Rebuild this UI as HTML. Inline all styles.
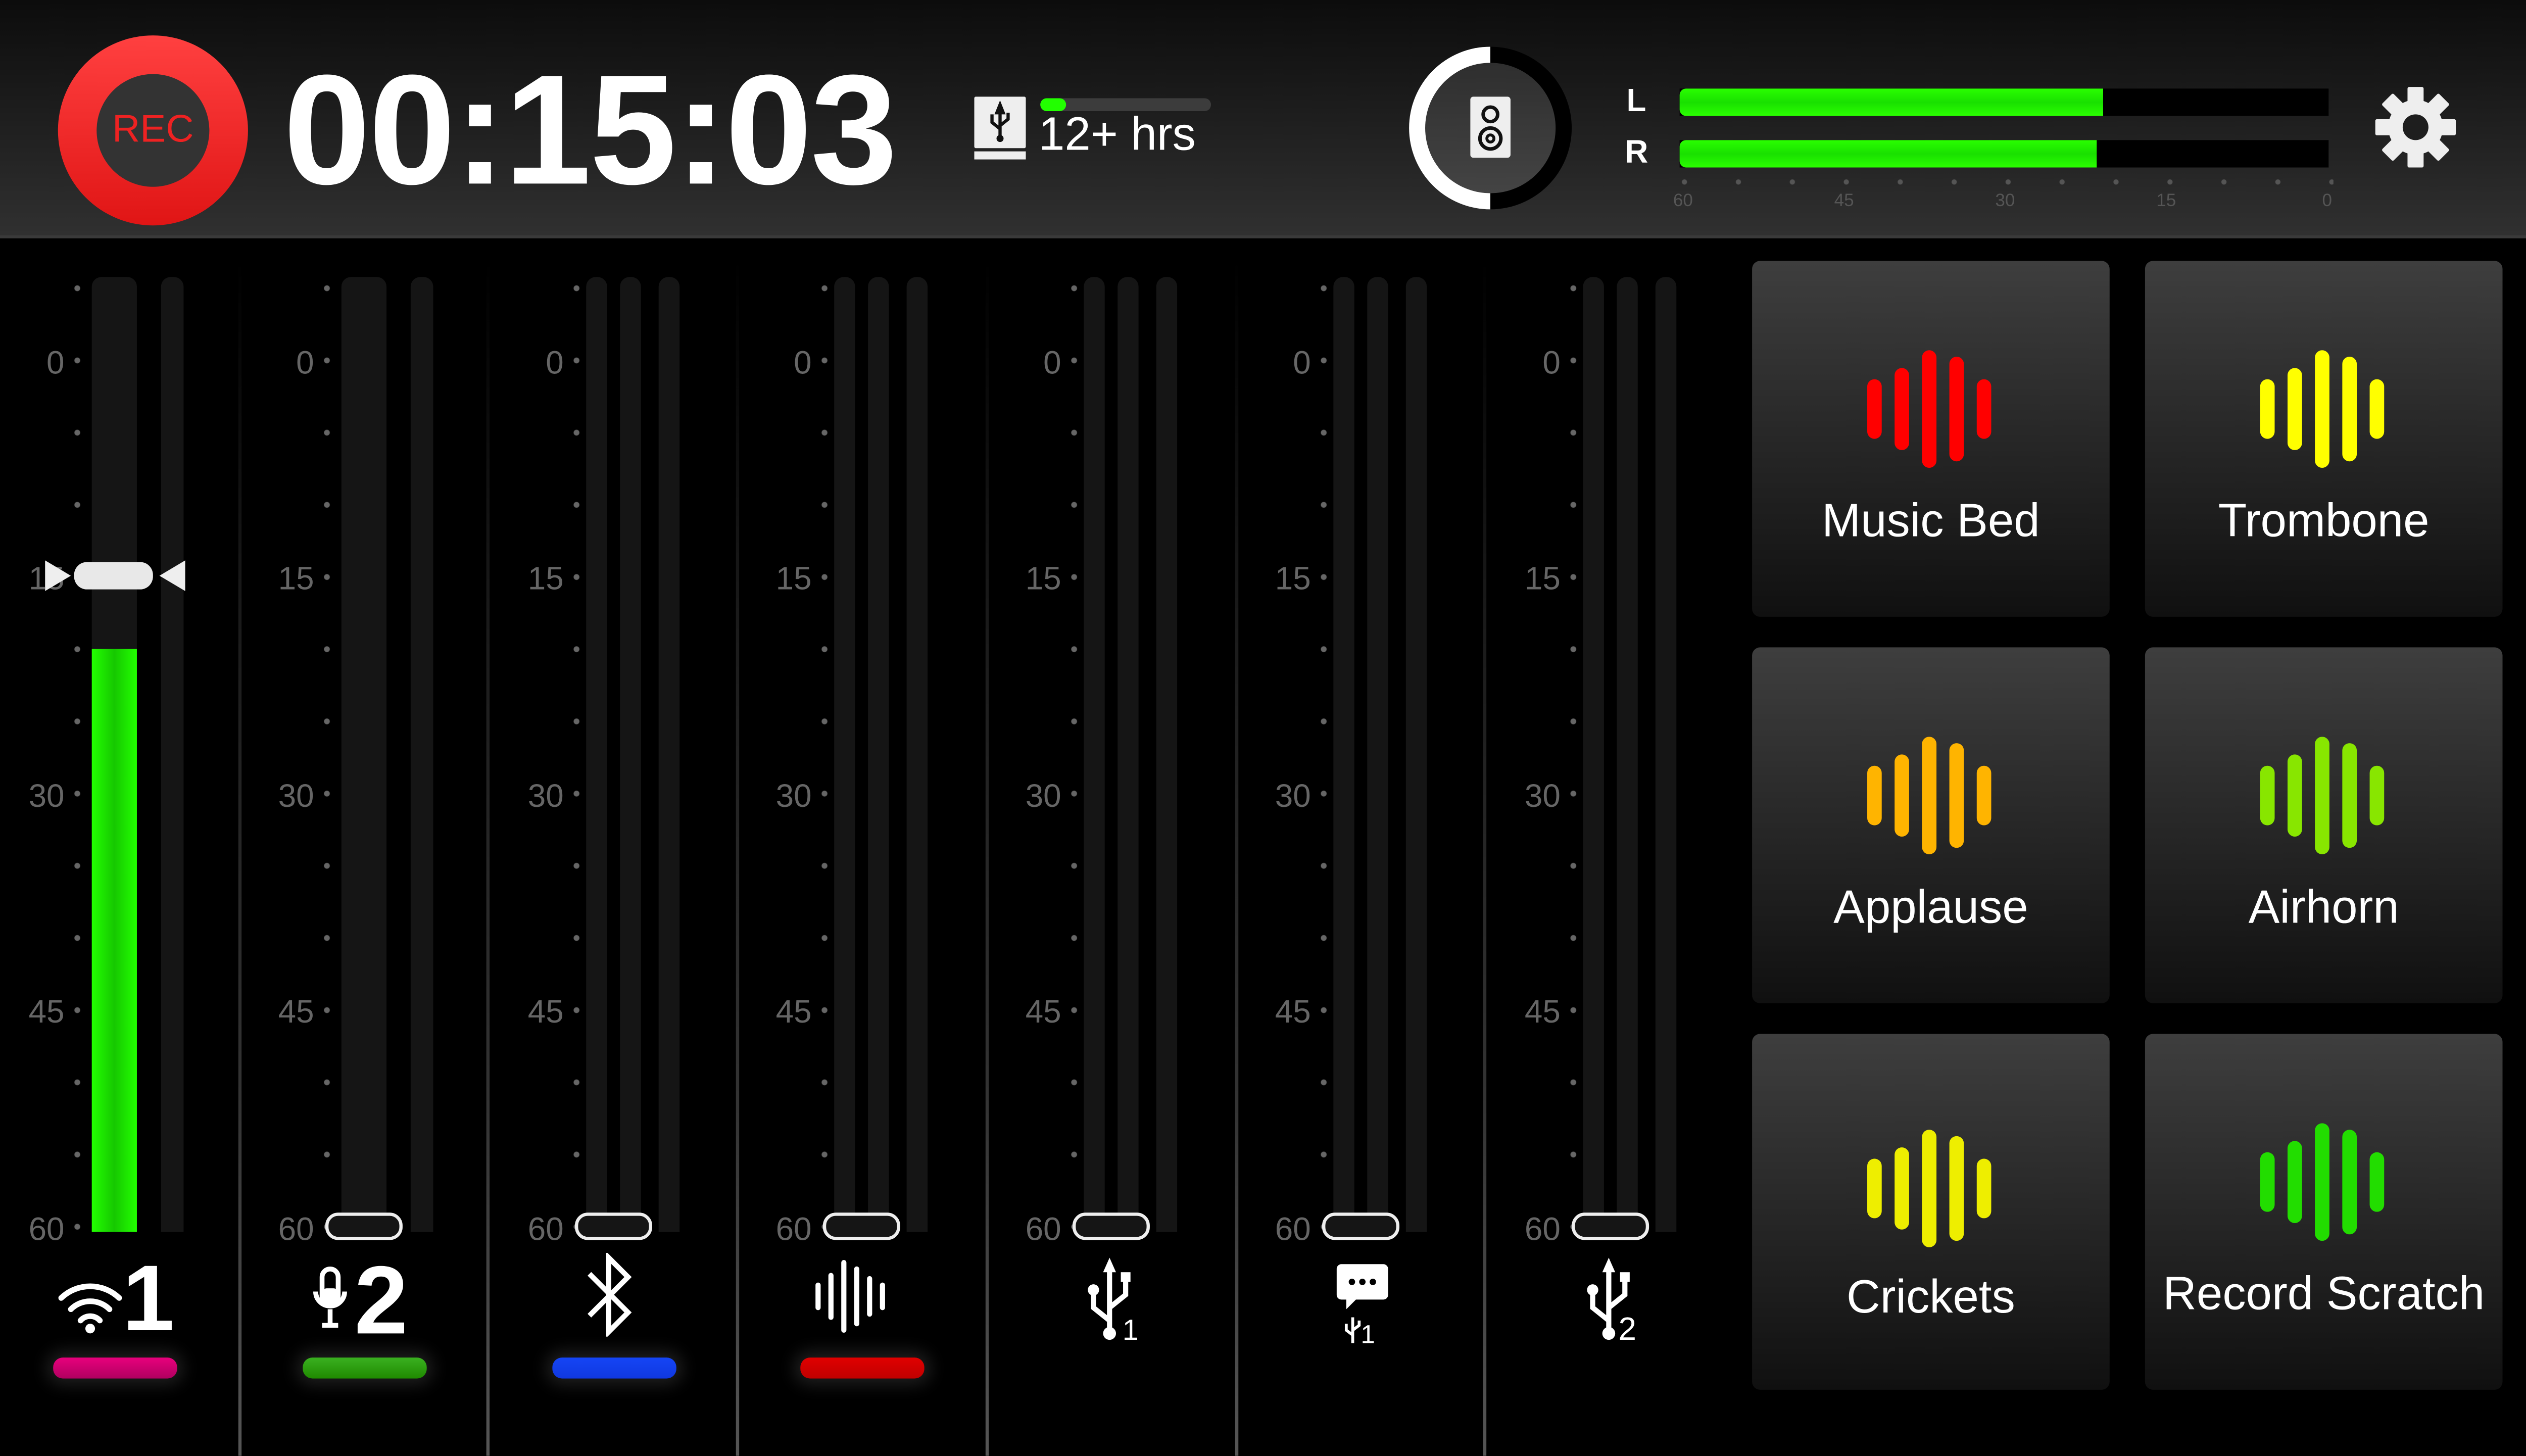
<!DOCTYPE html>
<html><head><meta charset="utf-8"><style>
*{margin:0;padding:0;box-sizing:border-box}
html,body{width:5132px;height:2881px;background:#000;overflow:hidden}
#s{position:absolute;left:0;top:0;width:1610px;height:904px;transform:scale(3.1876);transform-origin:0 0;background:#000;font-family:"Liberation Sans",sans-serif;color:#fff}
.a{position:absolute}
.top{left:0;top:0;width:1610px;height:148px;background:linear-gradient(#0c0c0c,#303030);border-bottom:2px solid #3a3a3a}
.lbl{position:absolute;width:30px;text-align:right;font-size:20px;color:#666;line-height:20px}
.dots{position:absolute;top:176px;width:6px;height:595px;background:radial-gradient(circle at 3px 3px,#666 1.6px,transparent 2px);background-size:6px 44.83px}
.tr{position:absolute;top:172px;height:593px;background:#151515;border-radius:6px 6px 0 0}
.sep{position:absolute;top:160px;width:2px;height:744px;background:linear-gradient(#000,#1a1a1a 30%,#333 70%,#555)}
.fh{position:absolute;top:753px;width:48px;height:17px;border:2.5px solid #eee;border-radius:8px;background:#151515}
.pill{position:absolute;top:843px;width:77px;height:13px;border-radius:6px;box-shadow:0 0 10px 4px rgba(60,60,60,.5)}
.pad{position:absolute;width:222px;height:221px;border-radius:5px;background:linear-gradient(#3e3e3e,#101010)}
.pad span{position:absolute;left:0;width:100%;text-align:center;font-size:29px;top:146px}
.pad svg{position:absolute;left:71px;top:54px}
</style></head><body><div id="s">
<div class="a top"></div>
<div class="a" style="left:36px;top:22px;width:118px;height:118px;border-radius:50%;background:linear-gradient(#ff4040,#e01515)"></div>
<div class="a" style="left:60px;top:46px;width:70px;height:70px;border-radius:50%;background:#333"></div>
<div class="a" style="left:60px;top:66px;width:70px;text-align:center;color:#ee2222;font-size:24px;line-height:30px">REC</div>
<div class="a" style="left:176px;top:26px;font-size:97px;font-weight:bold;line-height:110px;letter-spacing:-1px">00:15:03</div>
<svg class="a" style="left:604px;top:60px" width="34" height="40" viewBox="0 0 34 40"><rect x="1" y="0" width="32" height="32" rx="1" fill="#eee"/><rect x="1" y="34" width="32" height="5" fill="#eee"/><path d="M17 5v22M17 5l-2 5h4z M17 20l-5-4v-5 M17 18l5-4v-4" stroke="#111" stroke-width="2" fill="none"/><circle cx="17" cy="26" r="2.2" fill="#111"/></svg>
<div class="a" style="left:646px;top:61px;width:106px;height:8px;border-radius:4px;background:#3c3c3c"></div>
<div class="a" style="left:646px;top:61px;width:16px;height:8px;border-radius:4px;background:#22ff00"></div>
<div class="a" style="left:645px;top:67px;font-size:29px;line-height:34px">12+ hrs</div>
<div class="a" style="left:875px;top:29px;width:101px;height:101px;border-radius:50%;background:linear-gradient(90deg,#fff 50%,#000 50%)"></div>
<div class="a" style="left:885px;top:39px;width:81px;height:81px;border-radius:50%;background:linear-gradient(#2e2e2e,#444)"></div>
<svg class="a" style="left:913px;top:60px" width="25" height="38" viewBox="0 0 25 38"><rect width="25" height="38" rx="2" fill="#eee"/><circle cx="12.5" cy="11" r="4.5" fill="none" stroke="#111" stroke-width="2.2"/><circle cx="12.5" cy="26" r="6.5" fill="none" stroke="#111" stroke-width="2.2"/><circle cx="12.5" cy="26" r="2.2" fill="none" stroke="#111" stroke-width="1.8"/></svg>
<div class="a" style="left:1010px;top:52px;font-size:20px;font-weight:bold">L</div>
<div class="a" style="left:1009px;top:84px;font-size:20px;font-weight:bold">R</div>
<div class="a" style="left:1043px;top:55px;width:403px;height:17px;background:#000"></div>
<div class="a" style="left:1043px;top:55px;width:263px;height:17px;border-radius:4px 0 0 4px;background:linear-gradient(#2aff00,#19e000 50%,#2aff00)"></div>
<div class="a" style="left:1043px;top:87px;width:403px;height:17px;background:#000"></div>
<div class="a" style="left:1043px;top:87px;width:259px;height:17px;border-radius:4px 0 0 4px;background:linear-gradient(#2aff00,#19e000 50%,#2aff00)"></div>
<div class="a" style="left:1043px;top:110px;width:406px;height:6px;background:radial-gradient(circle at 3px 3px,#555 1.4px,transparent 1.8px);background-size:33.5px 6px"></div>
<div class="a" style="left:1039px;top:119px;font-size:11px;color:#555">60</div>
<div class="a" style="left:1139px;top:119px;font-size:11px;color:#555">45</div>
<div class="a" style="left:1239px;top:119px;font-size:11px;color:#555">30</div>
<div class="a" style="left:1339px;top:119px;font-size:11px;color:#555">15</div>
<div class="a" style="left:1442px;top:119px;font-size:11px;color:#555">0</div>
<svg class="a" style="left:1474px;top:53px" width="52" height="52" viewBox="-26 -26 52 52"><g fill="#eee"><circle r="17"/><g id="t"><rect x="-5" y="-25" width="10" height="12" rx="1"/></g><use href="#t" transform="rotate(45)"/><use href="#t" transform="rotate(90)"/><use href="#t" transform="rotate(135)"/><use href="#t" transform="rotate(180)"/><use href="#t" transform="rotate(225)"/><use href="#t" transform="rotate(270)"/><use href="#t" transform="rotate(315)"/></g><circle r="8" fill="#1e1e1e"/></svg>

<div class="sep" style="left:148px"></div><div class="sep" style="left:302px"></div><div class="sep" style="left:457px"></div><div class="sep" style="left:612px"></div><div class="sep" style="left:767px"></div><div class="sep" style="left:921px"></div>

<div class="a" style="left:0;top:0">
<div class="lbl" style="left:10px;top:216px">0</div><div class="lbl" style="left:10px;top:350px">15</div><div class="lbl" style="left:10px;top:485px">30</div><div class="lbl" style="left:10px;top:619px">45</div><div class="lbl" style="left:10px;top:754px">60</div>
<div class="dots" style="left:45px"></div>
<div class="tr" style="left:57px;width:28px"></div><div class="tr" style="left:100px;width:14px"></div>
<div class="a" style="left:57px;top:403px;width:28px;height:362px;background:linear-gradient(90deg,#22ff00,#16c800 50%,#22ff00)"></div>
<svg class="a" style="left:27px;top:347px" width="89" height="21" viewBox="0 0 89 21"><path d="M1 1L17 10.5L1 20z" fill="#eee"/><path d="M88 1L72 10.5L88 20z" fill="#eee"/><rect x="19" y="2" width="49" height="17" rx="8" fill="#e8e8e8"/></svg>
<svg class="a" style="left:34px;top:778px" width="80" height="52" viewBox="0 0 80 52"><g fill="none" stroke="#fff" stroke-width="3.5" stroke-linecap="round"><path d="M4 28a26 26 0 0 1 36 0"/><path d="M10 35a17 17 0 0 1 24 0"/><path d="M16 42a8 8 0 0 1 12 0"/></g><circle cx="22" cy="47" r="3" fill="#fff"/><text x="42" y="48" font-size="58" font-weight="bold" fill="#fff" font-family="Liberation Sans">1</text></svg>
<div class="pill" style="left:33px;background:linear-gradient(#e8007c,#b00060)"></div>
</div>
<div class="a" style="left:155px;top:0">
<div class="lbl" style="left:10px;top:216px">0</div><div class="lbl" style="left:10px;top:350px">15</div><div class="lbl" style="left:10px;top:485px">30</div><div class="lbl" style="left:10px;top:619px">45</div><div class="lbl" style="left:10px;top:754px">60</div>
<div class="dots" style="left:45px"></div>
<div class="tr" style="left:57px;width:28px"></div><div class="tr" style="left:100px;width:14px"></div>
<div class="fh" style="left:47px"></div>
<svg class="a" style="left:38px;top:776px" width="80" height="56" viewBox="0 0 80 56"><rect x="7" y="12" width="10" height="22" rx="5" fill="none" stroke="#fff" stroke-width="3"/><rect x="7" y="24" width="10" height="10" rx="3" fill="#fff"/><path d="M3 26a9 9 0 0 0 18 0M12 37v9M7 47h10" stroke="#fff" stroke-width="3" fill="none"/><text x="27" y="52" font-size="60" font-weight="bold" fill="#fff" font-family="Liberation Sans">2</text></svg>
<div class="pill" style="left:33px;background:linear-gradient(#3ab020,#1f8a00)"></div>
</div>
<div class="a" style="left:310px;top:0">
<div class="lbl" style="left:10px;top:216px">0</div><div class="lbl" style="left:10px;top:350px">15</div><div class="lbl" style="left:10px;top:485px">30</div><div class="lbl" style="left:10px;top:619px">45</div><div class="lbl" style="left:10px;top:754px">60</div>
<div class="dots" style="left:45px"></div>
<div class="tr" style="left:54px;width:13px"></div><div class="tr" style="left:75px;width:13px"></div><div class="tr" style="left:99px;width:13px"></div>
<div class="fh" style="left:47px"></div>
<svg class="a" style="left:52px;top:778px" width="34" height="52" viewBox="0 0 34 52"><path d="M4 13L28 37L16 49V3L28 15L4 39" fill="none" stroke="#fff" stroke-width="3.2"/></svg>
<div class="pill" style="left:33px;background:linear-gradient(#1545f5,#1038e0)"></div>
</div>
<div class="a" style="left:464px;top:0">
<div class="lbl" style="left:10px;top:216px">0</div><div class="lbl" style="left:10px;top:350px">15</div><div class="lbl" style="left:10px;top:485px">30</div><div class="lbl" style="left:10px;top:619px">45</div><div class="lbl" style="left:10px;top:754px">60</div>
<div class="dots" style="left:45px"></div>
<div class="tr" style="left:54px;width:13px"></div><div class="tr" style="left:75px;width:13px"></div><div class="tr" style="left:99px;width:13px"></div>
<div class="fh" style="left:47px"></div>
<svg class="a" style="left:40px;top:780px" width="56" height="50" viewBox="0 0 56 50"><g stroke="#fff" stroke-width="3.2" stroke-linecap="round"><path d="M4 18v14M12 12v26M20 4v42M28 8v34M36 14v22M44 18v14"/></g></svg>
<div class="pill" style="left:33px;background:linear-gradient(#e00000,#c00000)"></div>
</div>
<div class="a" style="left:619px;top:0">
<div class="lbl" style="left:10px;top:216px">0</div><div class="lbl" style="left:10px;top:350px">15</div><div class="lbl" style="left:10px;top:485px">30</div><div class="lbl" style="left:10px;top:619px">45</div><div class="lbl" style="left:10px;top:754px">60</div>
<div class="dots" style="left:45px"></div>
<div class="tr" style="left:54px;width:13px"></div><div class="tr" style="left:75px;width:13px"></div><div class="tr" style="left:99px;width:13px"></div>
<div class="fh" style="left:47px"></div>
<svg class="a" style="left:52px;top:780px" width="44" height="54" viewBox="0 0 44 54"><g stroke="#fff" stroke-width="3.2" fill="none" stroke-linecap="round"><path d="M18 8v40M18 40l-10-8v-10M18 32l10-8v-10"/></g><path d="M18 1l-4 9h8z" fill="#fff"/><circle cx="18" cy="48" r="4" fill="#fff"/><circle cx="8" cy="21" r="3.5" fill="#fff"/><rect x="25" y="10" width="6" height="6" fill="#fff"/><text x="26" y="52" font-size="18" fill="#fff" font-family="Liberation Sans">1</text></svg>
</div>
<div class="a" style="left:774px;top:0">
<div class="lbl" style="left:10px;top:216px">0</div><div class="lbl" style="left:10px;top:350px">15</div><div class="lbl" style="left:10px;top:485px">30</div><div class="lbl" style="left:10px;top:619px">45</div><div class="lbl" style="left:10px;top:754px">60</div>
<div class="dots" style="left:45px"></div>
<div class="tr" style="left:54px;width:13px"></div><div class="tr" style="left:75px;width:13px"></div><div class="tr" style="left:99px;width:13px"></div>
<div class="fh" style="left:47px"></div>
<svg class="a" style="left:56px;top:782px" width="34" height="54" viewBox="0 0 34 54"><path d="M3 3h26a3 3 0 0 1 3 3v16a3 3 0 0 1-3 3H12l-6 6v-6H3a3 3 0 0 1-3-3V6a3 3 0 0 1 3-3z" fill="#fff"/><circle cx="9.5" cy="14" r="2" fill="#000"/><circle cx="16" cy="14" r="2" fill="#000"/><circle cx="22.5" cy="14" r="2" fill="#000"/><g stroke="#fff" stroke-width="1.8" fill="none"><path d="M10 36v16M10 47l-4-3v-4M10 44l4-3v-3"/></g><text x="15" y="52" font-size="16" fill="#fff" font-family="Liberation Sans">1</text></svg>
</div>
<div class="a" style="left:929px;top:0">
<div class="lbl" style="left:10px;top:216px">0</div><div class="lbl" style="left:10px;top:350px">15</div><div class="lbl" style="left:10px;top:485px">30</div><div class="lbl" style="left:10px;top:619px">45</div><div class="lbl" style="left:10px;top:754px">60</div>
<div class="dots" style="left:45px"></div>
<div class="tr" style="left:54px;width:13px"></div><div class="tr" style="left:75px;width:13px"></div><div class="tr" style="left:99px;width:13px"></div>
<div class="fh" style="left:47px"></div>
<svg class="a" style="left:52px;top:780px" width="44" height="54" viewBox="0 0 44 54"><g stroke="#fff" stroke-width="3.2" fill="none" stroke-linecap="round"><path d="M18 8v40M18 40l-10-8v-10M18 32l10-8v-10"/></g><path d="M18 1l-4 9h8z" fill="#fff"/><circle cx="18" cy="48" r="4" fill="#fff"/><circle cx="8" cy="21" r="3.5" fill="#fff"/><rect x="25" y="10" width="6" height="6" fill="#fff"/><text x="24" y="52" font-size="20" fill="#fff" font-family="Liberation Sans">2</text></svg>
</div>

<div class="pad" style="left:1088px;top:162px"><svg width="80" height="76" viewBox="0 0 80 76"><g stroke="#ff0000" stroke-width="9" stroke-linecap="round"><path d="M5 24v28M22 17v42M39 6v64M56 10v56M73 24v28"/></g></svg><span>Music Bed</span></div>
<div class="pad" style="left:1332px;top:162px"><svg width="80" height="76" viewBox="0 0 80 76"><g stroke="#ffff00" stroke-width="9" stroke-linecap="round"><path d="M5 24v28M22 17v42M39 6v64M56 10v56M73 24v28"/></g></svg><span>Trombone</span></div>
<div class="pad" style="left:1088px;top:402px"><svg width="80" height="76" viewBox="0 0 80 76"><g stroke="#ffb400" stroke-width="9" stroke-linecap="round"><path d="M5 24v28M22 17v42M39 6v64M56 10v56M73 24v28"/></g></svg><span>Applause</span></div>
<div class="pad" style="left:1332px;top:402px"><svg width="80" height="76" viewBox="0 0 80 76"><g stroke="#88e600" stroke-width="9" stroke-linecap="round"><path d="M5 24v28M22 17v42M39 6v64M56 10v56M73 24v28"/></g></svg><span>Airhorn</span></div>
<div class="pad" style="left:1088px;top:642px"><svg width="80" height="76" viewBox="0 0 80 76" style="top:58px"><g stroke="#eeee00" stroke-width="9" stroke-linecap="round"><path d="M5 24v28M22 17v42M39 6v64M56 10v56M73 24v28"/></g></svg><span style="top:148px">Crickets</span></div>
<div class="pad" style="left:1332px;top:642px"><svg width="80" height="76" viewBox="0 0 80 76"><g stroke="#22dd00" stroke-width="9" stroke-linecap="round"><path d="M5 24v28M22 17v42M39 6v64M56 10v56M73 24v28"/></g></svg><span>Record Scratch</span></div>
</div></body></html>
